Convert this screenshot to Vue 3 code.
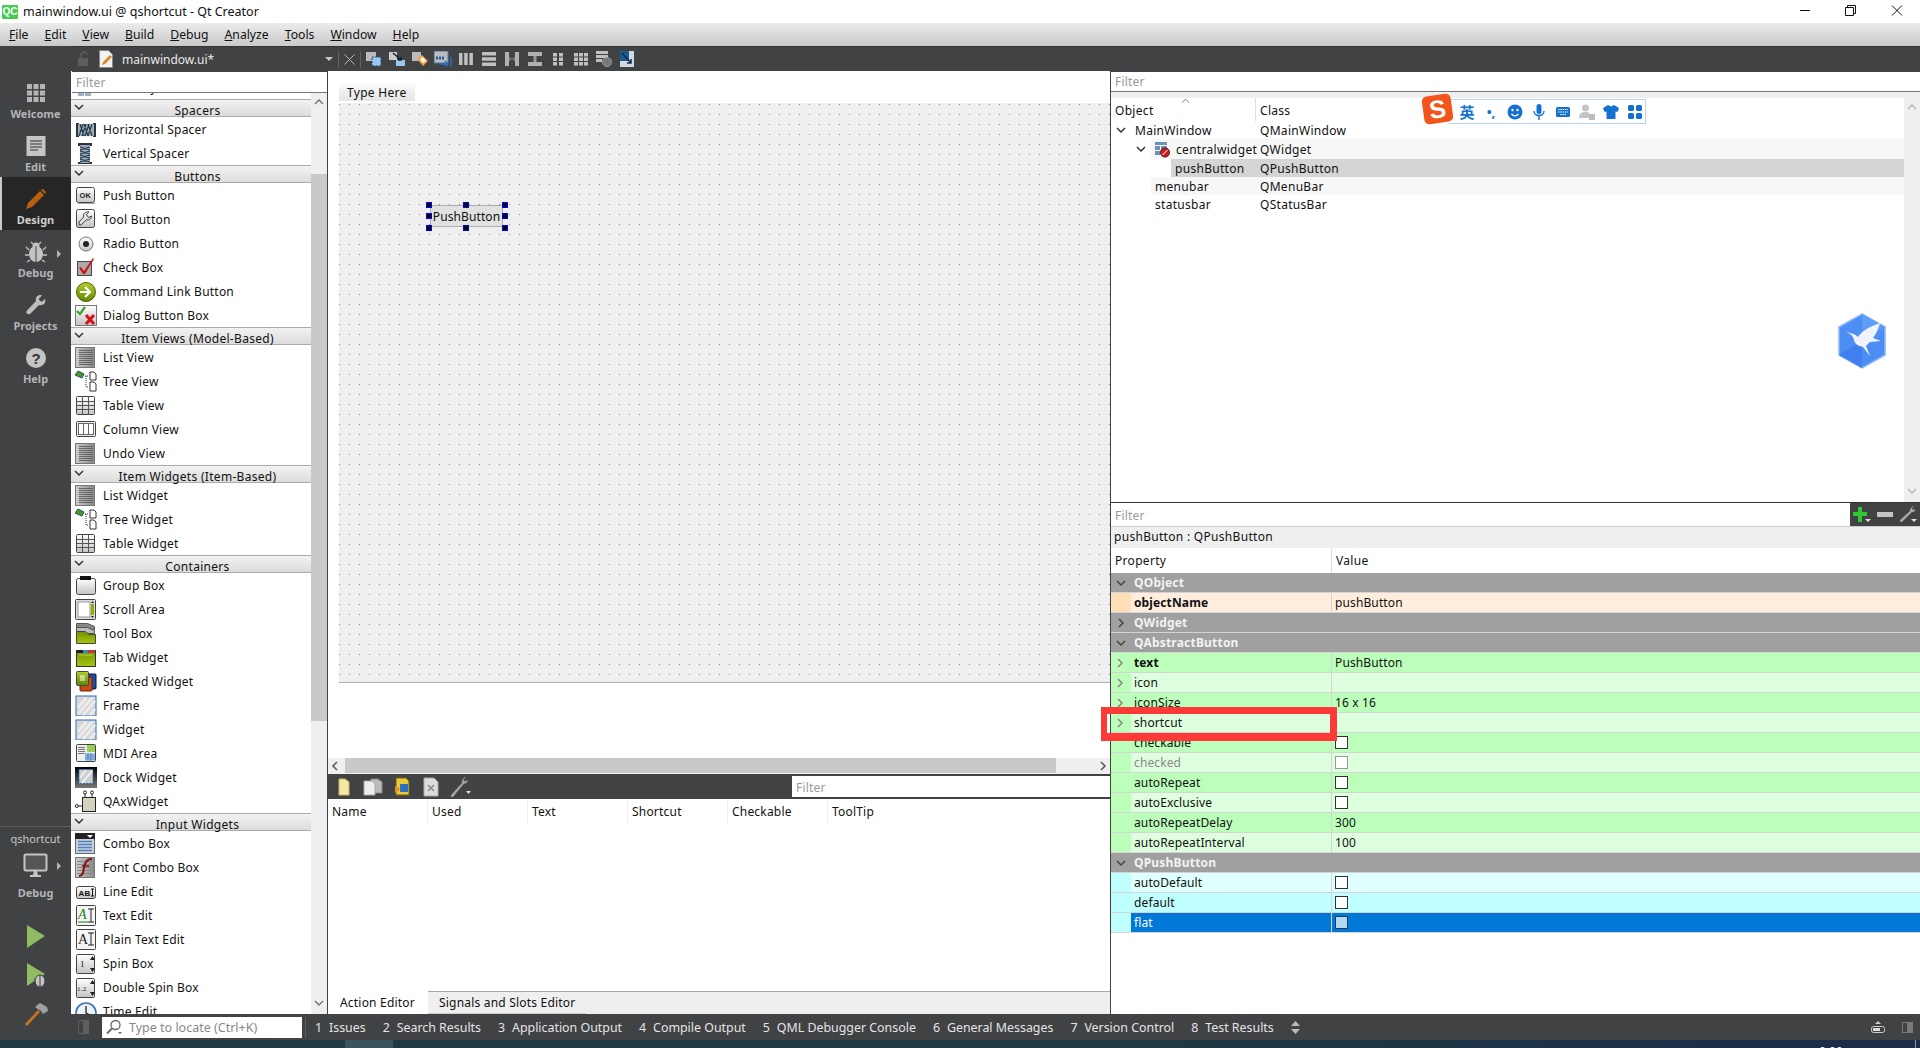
<script setup>
import { ref } from 'vue'

const menus = ['File', 'Edit', 'View', 'Build', 'Debug', 'Analyze', 'Tools', 'Window', 'Help']

const box = 'stroke="#444" stroke-width="1"'
const lines = (x1, x2, ys, c = '#777') => ys.map(y => `<path d="M${x1} ${y}H${x2}" stroke="${c}"/>`).join('')
const listIco = `<rect x=".5" y="1.5" width="19" height="20" fill="url(#gH)" stroke="#777"/>` + lines(4, 18, [4.5, 6.5, 8.5, 10.5, 12.5, 14.5, 16.5, 18.5], '#666')
const treeIco = `<path d="M0 5l3-4 6 3-2 4z" fill="#4a9a28" stroke="#255"/><path d="M10 6h4M11 6v11h3" stroke="#333" stroke-dasharray="1 1" fill="none"/><path d="M15 2h4l2 2v6h-6zM15 12h4l2 2v7h-6z" fill="#fff" stroke="#333"/>`
const tableIco = `<rect x="1.5" y="2.5" width="18" height="18" rx="1" fill="url(#gV)" ${box}/><path d="M1.5 7.5h18M1.5 11.5h18M1.5 15.5h18M7.5 2.5v18M13.5 2.5v18" stroke="#555"/>`
const hatch = `<rect x="1" y="2" width="20" height="20" fill="#d8d8d8" stroke="#2a70c0"/><path d="M3 14L11 4M3 20L17 4M8 21L20 7M15 21l5-6" stroke="#eee" stroke-width="2.4"/>`
const spin = (t, fs) => `<rect x="1.5" y="2.5" width="18" height="19" rx="1" fill="url(#gV)" ${box}/><text x="${fs > 7 ? 5 : 2}" y="15" font-size="${fs}" font-family="Liberation Serif" fill="#111">${t}</text><path d="M15 8l2.5-4 2.500 4zM15 16l2.500 4 2.500-4z" fill="#222"/>`

const icons = {
  hspacer: `<path d="M1 5h3v14H1zM18 5h3v14h-3z" fill="#333"/><rect x="3" y="6" width="16" height="12" fill="#9ab"/><path d="M4 18L8 6M7 18L11 6M10 18L14 6M13 18L17 6M5 6l4 12M9 6l4 12M13 6l4 12" stroke="#234" stroke-width="1.100"/>`,
  vspacer: `<path d="M3 1h14v3H3zM3 20h14v3H3z" fill="#333"/><rect x="5" y="3" width="10" height="18" fill="#9ab"/><path d="M5 5l10 3M5 9l10 3M5 13l10 3M5 17l10 3M15 5L5 8M15 9L5 12M15 13L5 16M15 17L5 20" stroke="#234" stroke-width="1.100"/>`,
  push: `<rect x="1.500" y="3.500" width="18" height="15" rx="2" fill="url(#gV)" ${box}/><text x="4.500" y="14" font-size="7.500" font-family="Liberation Sans" font-weight="700" fill="#222">OK</text><path d="M3 19.500h17" stroke="#aaa"/>`,
  tool: `<rect x="1.500" y="1.500" width="18" height="18" rx="2" fill="url(#gV)" ${box}/><path d="M14 4l-2.500 2.500 2 3 3-1.500c0 3-2.500 4.500-5 3.800L6 17H4v-3l4.500-5c-.8-3 2-6 5.500-5z" fill="#ddd" stroke="#444"/>`,
  radio: `<circle cx="11" cy="12" r="7" fill="url(#gV)" stroke="#777"/><circle cx="11" cy="12" r="3" fill="#222"/>`,
  check: `<rect x="2.500" y="5.500" width="14" height="14" fill="#aaa" ${box}/><path d="M6 11l3 4 9-13 1 1-9 15h-2l-4-6z" fill="#d4121a"/>`,
  command: `<circle cx="11" cy="12" r="9.500" fill="url(#gG)" stroke="#4c6500"/><path d="M5 12h9M10 7l5 5-5 5" stroke="#fff" stroke-width="2.200" fill="none"/>`,
  dialog: `<rect x=".5" y="1.500" width="21" height="20" fill="url(#gV)" stroke="#777"/><path d="M2 7l3 3 5-7" stroke="#3fa02c" stroke-width="2.200" fill="none"/><path d="M11 11l8 9M19 11l-8 9" stroke="#d4121a" stroke-width="3"/>`,
  list: listIco,
  tree: treeIco,
  table: tableIco,
  column: `<rect x="1.500" y="3.500" width="19" height="15" fill="#eee" ${box} rx="1"/><rect x="3.500" y="5.500" width="15" height="11" fill="#fff" stroke="#666"/><path d="M8.500 5.500v11M13.500 5.500v11" stroke="#666"/>`,
  group: `<rect x="1.500" y="4.500" width="19" height="16" rx="2" fill="url(#gV)" ${box}/><rect x="5" y="2" width="11" height="4" fill="#111"/>`,
  scroll: `<rect x=".5" y="1.500" width="20" height="20" rx="1" fill="#ddd" ${box}/><rect x="3" y="4" width="12" height="15" fill="#fff" stroke="#999"/><rect x="16" y="6" width="3" height="11" fill="#8fae00"/><path d="M16 5l1.500-2 1.500 2zM16 18l1.500 2 1.500-2z" fill="#222"/>`,
  toolbox: `<path d="M1.500 1.500h11l7 3v3h-18z" fill="#888" stroke="#555"/><path d="M1.500 5.500h11l7 3v3h-18z" fill="#bbb" stroke="#555"/><path d="M1.500 9.500h9l3 3h7v9h-19z" fill="url(#gG2)" stroke="#444"/>`,
  tab: `<rect x="1.500" y="4.500" width="19" height="16" fill="url(#gG2)" stroke="#333"/><path d="M1 4h10v3H1z" fill="#222"/><path d="M8 4h5v3H8z" fill="#3a85d0"/><path d="M13 4h7v3h-7z" fill="#c33"/><path d="M4 8h14v2H4z" fill="#9cbb20"/>`,
  stacked: `<rect x="8" y="4" width="13" height="15" rx="1" fill="#1c4fa0" stroke="#113"/><rect x="5" y="7" width="12" height="14" rx="1" fill="#c84b10" stroke="#622"/><rect x="1.500" y="1.500" width="12" height="14" rx="1" fill="url(#gG)" stroke="#444"/><path d="M5 6h5M5 8h5M5 10h5" stroke="#fff"/>`,
  frame: hatch,
  widget: hatch,
  mdi: `<rect x="1.500" y="2.500" width="19" height="17" rx="1" fill="#eee" ${box}/><rect x="12" y="3" width="8" height="7" fill="#9ccc55"/><rect x="10" y="11" width="10" height="8" fill="#bcd8f0"/><path d="M10 13h10M10 15h10M10 17h10M13 11v8M16 11v8" stroke="#4a80c0"/>${lines(3, 10, [5.500, 7.500, 9.500, 11.500])}`,
  dock: `<rect x="0" y="1" width="22" height="21" fill="url(#gBk)"/><rect x="4" y="3.500" width="14" height="14" fill="#ccc" stroke="#2a70c0" stroke-dasharray="2 1"/><path d="M5 12l6-8M7 17l10-12" stroke="#eee" stroke-width="2"/>`,
  qax: `<rect x="7.500" y="7.500" width="13" height="14" fill="#d6d0c0" stroke="#222"/><path d="M10 7V3M17 7V3M1 16h6" stroke="#222"/><circle cx="10" cy="2.500" r="1.500" fill="#fff" stroke="#222"/><circle cx="17" cy="2.500" r="1.500" fill="#fff" stroke="#222"/><circle cx="1.800" cy="16" r="1.500" fill="#fff" stroke="#222"/>`,
  combo: `<rect x=".5" y="1.500" width="19" height="20" fill="#c8d0d8" stroke="#666"/><rect x="0" y="1" width="20" height="6" fill="#222"/><path d="M12 3h6l-3 3z" fill="#fff"/><path d="M3 9.500h14M3 12.500h14M3 15.500h14M3 18.500h14" stroke="#5080c0" stroke-width="1.400"/>`,
  fontcombo: `<rect x=".5" y="1.500" width="19" height="20" fill="url(#gH)" stroke="#777"/>${lines(2, 18, [5.500, 8.500, 11.500, 14.500, 17.500], '#888')}<path d="M4 20c4 0 4-3 5-8s2-9 8-9" stroke="#8a1010" stroke-width="2" fill="none"/><path d="M7 10h7" stroke="#8a1010" stroke-width="1.500"/>`,
  line: `<rect x="1.500" y="6.500" width="19" height="12" rx="2" fill="url(#gV)" ${box}/><text x="3.500" y="15.500" font-size="8" font-family="Liberation Sans" font-weight="700" fill="#111">AB</text><path d="M16 9h3M16 16h3M17.500 9v7" stroke="#111"/>`,
  text: `<rect x="1.500" y="1.500" width="19" height="20" rx="1" fill="#f4f4f4" ${box}/><text x="3" y="15" font-size="14" font-style="italic" font-family="Liberation Serif" fill="#2a7a1a">A</text><path d="M3 18h10" stroke="#2a7a1a"/><path d="M13 5h6M13 18h6M16 5v13" stroke="#222"/>`,
  plain: `<rect x="1.500" y="1.500" width="19" height="20" rx="1" fill="#f4f4f4" ${box}/><text x="3" y="16" font-size="14" font-family="Liberation Serif" fill="#222">A</text><path d="M13 5h6M13 17h6M16 5v12" stroke="#222"/>`,
  spin: spin('1', 9),
  dspin: spin('1.2', 7),
  time: `<circle cx="11" cy="13" r="10" fill="#eef3fa" stroke="#3a70b0" stroke-width="1.600"/><path d="M11 6v7l4 2" stroke="#222" stroke-width="1.300" fill="none"/>`,
}

const sections = [
  { title: 'Spacers', items: [['Horizontal Spacer', 'hspacer'], ['Vertical Spacer', 'vspacer']] },
  { title: 'Buttons', items: [['Push Button', 'push'], ['Tool Button', 'tool'], ['Radio Button', 'radio'], ['Check Box', 'check'], ['Command Link Button', 'command'], ['Dialog Button Box', 'dialog']] },
  { title: 'Item Views (Model-Based)', items: [['List View', 'list'], ['Tree View', 'tree'], ['Table View', 'table'], ['Column View', 'column'], ['Undo View', 'list']] },
  { title: 'Item Widgets (Item-Based)', items: [['List Widget', 'list'], ['Tree Widget', 'tree'], ['Table Widget', 'table']] },
  { title: 'Containers', items: [['Group Box', 'group'], ['Scroll Area', 'scroll'], ['Tool Box', 'toolbox'], ['Tab Widget', 'tab'], ['Stacked Widget', 'stacked'], ['Frame', 'frame'], ['Widget', 'widget'], ['MDI Area', 'mdi'], ['Dock Widget', 'dock'], ['QAxWidget', 'qax']] },
  { title: 'Input Widgets', items: [['Combo Box', 'combo'], ['Font Combo Box', 'fontcombo'], ['Line Edit', 'line'], ['Text Edit', 'text'], ['Plain Text Edit', 'plain'], ['Spin Box', 'spin'], ['Double Spin Box', 'dspin'], ['Time Edit', 'time']] },
]

const treeRows = [
  { name: 'MainWindow', cls: 'QMainWindow', band: 1131, h: 18, chev: 1116 },
  { name: 'centralwidget', cls: 'QWidget', band: 1151, h: 20, chev: 1136, bg: '#f7f7f7', ico: true },
  { name: 'pushButton', cls: 'QPushButton', band: 1171, h: 18, bg: '#d5d5d5' },
  { name: 'menubar', cls: 'QMenuBar', band: 1151, h: 18, bg: '#f7f7f7' },
  { name: 'statusbar', cls: 'QStatusBar', band: 1151, h: 18 },
]

const props = [
  { section: 'QObject', open: true },
  { name: 'objectName', value: 'pushButton', bold: true, tone: 'orange' },
  { section: 'QWidget', open: false },
  { section: 'QAbstractButton', open: true },
  { name: 'text', value: 'PushButton', bold: true, tone: 'g1', arrow: true },
  { name: 'icon', tone: 'g2', arrow: true },
  { name: 'iconSize', value: '16 x 16', tone: 'g1', arrow: true },
  { name: 'shortcut', tone: 'g2', arrow: true },
  { name: 'checkable', tone: 'g1', check: true },
  { name: 'checked', tone: 'g2', check: true, dim: true },
  { name: 'autoRepeat', tone: 'g1', check: true },
  { name: 'autoExclusive', tone: 'g2', check: true },
  { name: 'autoRepeatDelay', value: '300', tone: 'g1' },
  { name: 'autoRepeatInterval', value: '100', tone: 'g2' },
  { section: 'QPushButton', open: true },
  { name: 'autoDefault', tone: 'c2', check: true },
  { name: 'default', tone: 'c1', check: true },
  { name: 'flat', tone: 'c1', check: true, selected: true },
]

const actionCols = ['Name', 'Used', 'Text', 'Shortcut', 'Checkable', 'ToolTip']
const outputs = ['Issues', 'Search Results', 'Application Output', 'Compile Output', 'QML Debugger Console', 'General Messages', 'Version Control', 'Test Results']
const activeTab = ref('action')
</script>

<template>
  <div class="app">
    <svg class="defs" width="0" height="0">
      <defs>
        <linearGradient id="gV" x1="0" y1="0" x2="0" y2="1"><stop offset="0" stop-color="#fff" /><stop offset="1" stop-color="#c4c4c4" /></linearGradient>
        <linearGradient id="gH" x1="0" y1="0" x2="1" y2="0"><stop offset="0" stop-color="#ccc" /><stop offset="1" stop-color="#888" /></linearGradient>
        <linearGradient id="gG" x1="0" y1="0" x2="0" y2="1"><stop offset="0" stop-color="#b4cf2e" /><stop offset="1" stop-color="#5f8800" /></linearGradient>
        <linearGradient id="gG2" x1="0" y1="0" x2="0" y2="1"><stop offset="0" stop-color="#6f9400" /><stop offset="1" stop-color="#a5c510" /></linearGradient>
        <linearGradient id="gBk" x1="0" y1="0" x2="0" y2="1"><stop offset="0" stop-color="#000" /><stop offset="1" stop-color="#777" /></linearGradient>
      </defs>
    </svg>

    <header class="titlebar">
      <span class="qc-logo">QC</span>
      <span class="title-text">mainwindow.ui @ qshortcut - Qt Creator</span>
      <div class="win-btns">
        <svg width="46" height="23" viewBox="0 0 46 23"><path d="M18 10.500h10" stroke="#111" /></svg>
        <svg width="46" height="23" viewBox="0 0 46 23"><path d="M17.500 7.500h8v8h-8zM19.500 7.500v-2h8v8h-2" stroke="#111" fill="none" /></svg>
        <svg width="46" height="23" viewBox="0 0 46 23"><path d="M18 5.500l10 10M28 5.500l-10 10" stroke="#111" fill="none" /></svg>
      </div>
    </header>

    <nav class="menubar">
      <span v-for="m in menus" :key="m"><u>{{ m[0] }}</u>{{ m.slice(1) }}</span>
    </nav>

    <div class="workspace">
      <aside class="sidebar">
        <div class="side-item">
          <svg width="22" height="22" viewBox="0 0 22 22"><path d="M2 2h5v5H2zM8.500 2h5v5h-5zM15 2h5v5h-5zM2 8.500h5v5H2zM8.500 8.500h5v5h-5zM15 8.500h5v5h-5zM2 15h5v5H2zM8.500 15h5v5h-5zM15 15h5v5h-5z" fill="#b4b4b4" /></svg>
          <span>Welcome</span>
        </div>
        <div class="side-item">
          <svg width="22" height="22" viewBox="0 0 22 22"><rect x="1.500" y="1" width="19" height="20" fill="#c4c4c4" /><path d="M5 6h12M5 9h12M5 12h12M5 15h8" stroke="#333" /></svg>
          <span>Edit</span>
        </div>
        <div class="side-item active">
          <svg width="22" height="22" viewBox="0 0 22 22"><path d="M1 21l2-6L15 3l4 4L7 19z" fill="#b8620f" /><path d="M16 2l2-1 3 3-1 2z" fill="#b8620f" /></svg>
          <span>Design</span>
        </div>
        <div class="side-item">
          <svg width="22" height="22" viewBox="0 0 22 22"><ellipse cx="11" cy="13" rx="7" ry="8" fill="#c4c4c4" /><circle cx="11" cy="5" r="3.500" fill="#c4c4c4" /><path d="M11 5v16" stroke="#404244" /><path d="M4 9L1 6M18 9l3-3M4 14H0M18 14h4M5 19l-3 2M17 19l3 2M8 3L6 1M14 3l2-2" stroke="#c4c4c4" stroke-width="1.300" /></svg>
          <span>Debug</span>
          <i class="side-tri"></i>
        </div>
        <div class="side-item">
          <svg width="22" height="22" viewBox="0 0 22 22"><path d="M20 5l-3.500 3-3-3L17 1.500C13.500 0 10 3 11 7L1.500 17c-1 2 1.500 4 3.500 3L14 11c4 1 7.500-2 6-6z" fill="#bdbdbd" /></svg>
          <span>Projects</span>
        </div>
        <div class="side-item">
          <svg width="22" height="22" viewBox="0 0 22 22"><circle cx="11" cy="11" r="10" fill="#c4c4c4" /><text x="11" y="16.500" text-anchor="middle" font-size="15" font-weight="700" font-family="Liberation Sans" fill="#333">?</text></svg>
          <span>Help</span>
        </div>

        <div class="kit">
          <div class="kit-name">qshortcut</div>
          <div class="kit-mon">
            <svg width="26" height="26" viewBox="0 0 26 26"><rect x="1.500" y="1.500" width="22" height="16" rx="1" fill="#555" stroke="#c4c4c4" stroke-width="2" /><path d="M11 18h3l1 4h3v2H7v-2h3z" fill="#c4c4c4" /></svg>
            <i class="side-tri"></i>
          </div>
          <div class="kit-label">Debug</div>
        </div>
        <div class="run-btn first">
          <svg width="24" height="24" viewBox="0 0 24 24"><path d="M3 1l18 11L3 24z" fill="#8fbb62" /></svg>
        </div>
        <div class="run-btn">
          <svg width="24" height="26" viewBox="0 0 24 26"><path d="M3 1l18 11L3 24z" fill="#8fbb62" /><ellipse cx="16" cy="19" rx="5" ry="6" fill="#c4c4c4" stroke="#404244" /><path d="M16 13v12M10 17l2 1M22 17l-2 1M10 21l2 0M22 21l-2 0" stroke="#404244" /></svg>
        </div>
        <div class="run-btn">
          <svg width="26" height="26" viewBox="0 0 26 26"><path d="M2 23L15 9l2 2L4 25z" fill="#c8741e" /><path d="M12 6l5-4 7 4 1 4-5 3-2-3-2-1z" fill="#a0a0a0" /></svg>
        </div>
      </aside>

      <div class="main">
        <div class="toolbar">
          <svg class="lock" width="14" height="16" viewBox="0 0 14 16"><path d="M1 7h10v8H1z" fill="#5a5c5e" /><path d="M4 7V4a3 3 0 0 1 6 0" stroke="#5a5c5e" stroke-width="1.500" fill="none" /></svg>
          <svg class="doc" width="14" height="18" viewBox="0 0 14 18"><path d="M.5.5h9l4 4v13H.5z" fill="#f2f2f2" stroke="#888" /><path d="M3 15l1-3 7-7 2 2-7 7z" fill="#d88a20" /></svg>
          <span class="doc-name">mainwindow.ui*</span>
          <i class="tb-arrow"></i>
          <i class="tb-sep"></i>
          <svg class="tb-close" width="11" height="11" viewBox="0 0 11 11"><path d="M.5.5l10 10M10.500.5l-10 10" stroke="#b8b8b8" /></svg>
          <i class="tb-sep second"></i>
          <div class="tb-icons">
            <svg width="16" height="16" viewBox="0 0 16 16"><rect x="0" y="1" width="10" height="9" fill="#bbb" /><rect x="6" y="6" width="9" height="9" fill="#9cc8f0" stroke="#246" stroke-dasharray="2 1" /></svg>
            <svg width="16" height="16" viewBox="0 0 16 16"><rect x="0" y="1" width="8" height="8" fill="#ccc" /><rect x="7" y="9" width="9" height="6" fill="#9cc8f0" /><path d="M4 2l8 7M12 6v3H9" stroke="#123" stroke-width="1.500" fill="none" /></svg>
            <svg width="16" height="16" viewBox="0 0 16 16"><rect x="0" y="1" width="9" height="9" fill="#bbb" /><path d="M5 8l5-4 6 6-5 5z" fill="#f5a040" /><path d="M8 8l3-2 3 4-3 2z" fill="#fff" /></svg>
            <svg width="18" height="16" viewBox="0 0 18 16"><rect x="0" y="0" width="14" height="12" fill="#bbb" stroke="#4a78b0" /><path d="M2 7h9" stroke="#2a5a9a" stroke-width="3" stroke-dasharray="2 1" /><path d="M5 13h8M11 10l3 3-3 3M17 6v10" stroke="#2a70c0" stroke-width="1.500" fill="none" /></svg>
            <svg width="14" height="14" viewBox="0 0 14 14"><path d="M0 1h3.500v12H0zM5.200 1h3.500v12H5.200zM10.400 1h3.500v12h-3.500z" fill="#c0c0c0" /></svg>
            <svg width="14" height="14" viewBox="0 0 14 14"><path d="M0 0h14v3.500H0zM0 5.200h14v3.500H0zM0 10.400h14v3.500H0z" fill="#c0c0c0" /></svg>
            <svg width="14" height="14" viewBox="0 0 14 14"><path d="M0 0h4v14H0zM10 0h4v14h-4z" fill="#b0b0b0" /><path d="M4 7h6M5 5l-1 2 1 2M9 5l1 2-1 2" stroke="#888" fill="none" /></svg>
            <svg width="14" height="14" viewBox="0 0 14 14"><path d="M0 0h14v4H0zM0 10h14v4H0z" fill="#b0b0b0" /><path d="M7 4v6" stroke="#999" stroke-width="3" /></svg>
            <svg width="10" height="14" viewBox="0 0 10 14"><path d="M0 1h4v3.500H0zM6 1h4v3.500H6zM0 5.500h4V9H0zM6 5.500h4V9H6zM0 10h4v3.500H0zM6 10h4v3.500H6z" fill="#c0c0c0" /></svg>
            <svg width="14" height="14" viewBox="0 0 14 14"><path d="M0 1h4v3.500H0zM5 1h4v3.500H5zM10 1h4v3.500h-4zM0 5.500h4V9H0zM5 5.500h4V9H5zM10 5.500h4V9h-4zM0 10h4v3.500H0zM5 10h4v3.500H5zM10 10h4v3.500h-4z" fill="#c0c0c0" /></svg>
            <svg width="16" height="16" viewBox="0 0 16 16"><path d="M0 0h12v3H0zM0 4h12v3H0zM0 8h6v3H0z" fill="#c0c0c0" /><circle cx="11" cy="11" r="4.500" fill="#777" stroke="#999" /></svg>
            <svg width="14" height="16" viewBox="0 0 14 16"><rect x="0" y="0" width="14" height="16" fill="#d0d8e0" /><path d="M0 0h9v10H0z" fill="#1a5a90" /><path d="M2 2l9 10M11 8v4H7" stroke="#0c2a50" stroke-width="1.500" fill="none" /></svg>
          </div>
        </div>

        <div class="content">
          <section class="palette">
            <div class="filter pal-filter">Filter</div>
            <div class="pal-body">
              <div class="pal-list">
                <div class="cut-row">
                  <div class="widget-row">
                    <svg class="ico" width="22" height="22" viewBox="0 0 22 22"><rect x="3" y="14" width="6" height="6" fill="#9cb0cc" /><rect x="10" y="14" width="6" height="6" fill="#9cb0cc" /></svg>
                    <span>Form Layout</span>
                  </div>
                </div>
                <template v-for="s in sections" :key="s.title">
                  <div class="pal-head">
                    <svg class="chev" viewBox="0 0 10 10"><polyline points="1,3 5,7 9,3" /></svg>
                    {{ s.title }}
                  </div>
                  <div v-for="it in s.items" :key="it[0]" class="widget-row">
                    <svg class="ico" width="22" height="22" viewBox="0 0 22 22" v-html="icons[it[1]]"></svg>
                    <span>{{ it[0] }}</span>
                  </div>
                </template>
              </div>
              <div class="vscroll">
                <svg class="sarrow" viewBox="0 0 10 10"><polyline points="1,7 5,3 9,7" /></svg>
                <div class="vthumb"></div>
                <svg class="sarrow bottom" viewBox="0 0 10 10"><polyline points="1,3 5,7 9,3" /></svg>
              </div>
            </div>
          </section>

          <section class="center">
            <div class="canvas">
              <div class="form-menu">Type Here</div>
              <div class="form">
                <div class="form-btn">
                  PushButton
                  <i v-for="n in 8" :key="n" class="handle" :class="'h' + n"></i>
                </div>
              </div>
            </div>
            <div class="hscroll">
              <svg class="sarrow" viewBox="0 0 10 10"><polyline points="7,1 3,5 7,9" /></svg>
              <div class="hthumb"></div>
              <svg class="sarrow" viewBox="0 0 10 10"><polyline points="3,1 7,5 3,9" /></svg>
            </div>
            <div class="action-tb">
              <div class="action-icons">
                <svg width="14" height="18" viewBox="0 0 14 18"><path d="M2 1h6l4 3v13H2z" fill="#f4e8a8" stroke="#cdb860" /></svg>
                <svg width="20" height="18" viewBox="0 0 20 18"><path d="M8 1h7l4 3v11H8z" fill="#bbb" stroke="#888" /><path d="M1 3h8l3 3v11H1z" fill="#eee" stroke="#aaa" /></svg>
                <svg width="18" height="20" viewBox="0 0 18 20"><path d="M3 1h10l3 3v14H3z" fill="#e8c83c" stroke="#7a5a10" /><path d="M7 7h8v8H7z" fill="#2a70c0" /><path d="M2 9l6 3-6 4z" fill="#e89020" /></svg>
                <svg width="16" height="20" viewBox="0 0 16 20"><path d="M1 1h10l4 4v14H1z" fill="#dcdcdc" stroke="#aaa" /><path d="M5 8l6 6M11 8l-6 6" stroke="#888" stroke-width="1.500" /></svg>
                <svg width="22" height="22" viewBox="0 0 22 22"><path d="M17 1l-2.500 2.500 1.500 2 2.500-1.500c.5 2-1 4-3.500 3.500L4 21H2v-2L13 7c-.5-2.500 1.500-6 4-6z" fill="#aaa" stroke="#666" stroke-width=".5" /><path d="M17 15h5l-2.500 3z" fill="#ddd" /></svg>
              </div>
              <div class="filter action-filter">Filter</div>
            </div>
            <div class="action-head">
              <div v-for="c in actionCols" :key="c" class="action-col">{{ c }}</div>
            </div>
            <div class="action-body"></div>
            <div class="tabs">
              <div class="tab" :class="{ on: activeTab === 'action' }">Action Editor</div>
              <div class="tab second" :class="{ on: activeTab === 'signals' }">Signals and Slots Editor</div>
            </div>
          </section>

          <section class="right">
            <div class="inspector">
              <div class="filter right-filter">Filter</div>
              <div class="gap-band"></div>
              <div class="insp-body">
                <div class="insp-main">
                  <div class="insp-head">
                    <div class="ih-object">Object
                      <svg class="sort" viewBox="0 0 10 6"><polyline points="1,5 5,1 9,5" /></svg>
                    </div>
                    <div class="ih-class">Class</div>
                  </div>
                  <div v-for="r in treeRows" :key="r.name" class="tree-row" :style="{ height: r.h + 'px' }">
                    <div class="tree-gutter" :style="{ width: r.band - 1111 + 'px' }">
                      <svg v-if="r.chev" class="chev" :style="{ marginLeft: r.chev - 1111 + 'px' }" viewBox="0 0 10 10"><polyline points="1,3 5,7 9,3" /></svg>
                    </div>
                    <div class="tree-band" :style="{ background: r.bg || 'transparent' }">
                      <div class="tree-name" :style="{ width: 1260 - r.band + 'px' }">
                        <svg v-if="r.ico" class="tree-ico" width="17" height="17" viewBox="0 0 17 17"><path d="M1 1h12v3H1zM1 5h5v4H1zM7 5h6v4H7zM1 10h5v4H1z" fill="#6a8fb8" /><circle cx="11" cy="11.500" r="4.500" fill="#c82020" stroke="#601010" /><path d="M8.500 14l5-5" stroke="#fff" /></svg>
                        <span>{{ r.name }}</span>
                      </div>
                      <span>{{ r.cls }}</span>
                    </div>
                  </div>
                </div>
                <div class="vscroll insp-scroll">
                  <svg class="sarrow" viewBox="0 0 10 10"><polyline points="1,7 5,3 9,7" /></svg>
                  <svg class="sarrow bottom" viewBox="0 0 10 10"><polyline points="1,3 5,7 9,3" /></svg>
                </div>
              </div>

              <div class="sogou">
                <span class="sg-s">S</span>
                <div class="sg-bar">
                  <span class="sg-cn">英</span>
                  <span class="sg-punc">•,</span>
                  <svg width="16" height="16" viewBox="0 0 16 16"><circle cx="8" cy="8" r="7.500" fill="#1372d0" /><circle cx="5.500" cy="6" r="1.200" fill="#fff" /><circle cx="10.500" cy="6" r="1.200" fill="#fff" /><path d="M4.500 10c2 2.500 5 2.500 7 0" stroke="#fff" stroke-width="1.300" fill="none" /></svg>
                  <svg width="16" height="16" viewBox="0 0 16 16"><rect x="5.500" y="0" width="5" height="10" rx="2.500" fill="#1372d0" /><path d="M3 7c0 6 10 6 10 0M8 12v4" stroke="#1372d0" stroke-width="1.400" fill="none" /></svg>
                  <svg width="16" height="16" viewBox="0 0 16 16"><rect x="1" y="3" width="14" height="10" rx="1.500" fill="#1372d0" /><path d="M3 5.500h10M3 8h10M5 10.500h6" stroke="#fff" stroke-dasharray="1.500 .8" /></svg>
                  <svg width="16" height="16" viewBox="0 0 16 16"><circle cx="6.500" cy="4" r="3.500" fill="#c4c4c4" /><path d="M0 14c0-5 3-6 6.500-6s5 1 5 6z" fill="#c4c4c4" /><path d="M10 10h6v6h-6z" fill="#bbb" /></svg>
                  <svg width="16" height="16" viewBox="0 0 16 16"><path d="M5 1l3 1.500L11 1l5 3-1.500 4-2-.5V15h-9V7.500l-2 .5L0 4z" fill="#1372d0" /></svg>
                  <svg width="16" height="16" viewBox="0 0 16 16"><rect x="1" y="1" width="6" height="6" rx="1.500" fill="#1372d0" /><rect x="9" y="1" width="6" height="6" rx="1.500" fill="#1372d0" /><rect x="1" y="9" width="6" height="6" rx="1.500" fill="#1372d0" /><rect x="9" y="9" width="6" height="6" rx="1.500" fill="#1372d0" /></svg>
                </div>
              </div>

              <svg class="thunder" width="50" height="56" viewBox="0 0 50 56">
                <path d="M25 1l23 13v28L25 55 2 42V14z" fill="#4d8ef5" stroke="#8bb6fa" stroke-width="1.500" />
                <path d="M25 1l23 13-23 14z" fill="#5f9bf7" />
                <path d="M25 55L2 42l23-14z" fill="#3f80ee" />
                <path d="M9 19c5 1 9 2 12 5 4-6 11-10 22-14-2 7-4 11-7 15l8 3-11 1c-2 2-3 3-4 4l4 10-7-9c-5-1-8-3-9-7-1-4-3-6-8-8z" fill="#eef3fd" />
              </svg>
            </div>

            <div class="prop-tb">
              <div class="filter prop-filter">Filter</div>
              <div class="prop-icons">
                <svg width="18" height="16" viewBox="0 0 18 16"><path d="M5 0h4v5h5v4H9v6H5V9H0V5h5z" fill="#32c832" /><path d="M12 12h6l-3 3z" fill="#ddd" /></svg>
                <svg width="16" height="6" viewBox="0 0 16 6"><rect x="0" y="0" width="16" height="5" fill="#c4c4c4" /></svg>
                <svg width="18" height="18" viewBox="0 0 18 18"><path d="M15 0l-2 2 1 2 2-1c.5 2-1 3.500-3 3L3 16H1v-2L11 5c-.5-2 2-5 4-5z" fill="#aaa" stroke="#666" stroke-width=".5" /><path d="M12 13h6l-3 3z" fill="#ddd" /></svg>
              </div>
            </div>
            <div class="prop-title">pushButton : QPushButton</div>
            <div class="prop-head">
              <div class="ph-name">Property</div>
              <div class="ph-val">Value</div>
            </div>
            <div class="prop-table">
              <template v-for="p in props" :key="p.section || p.name">
                <div v-if="p.section" class="prop-section">
                  <svg class="chev" viewBox="0 0 10 10"><polyline :points="p.open ? '1,3 5,7 9,3' : '3,1 7,5 3,9'" /></svg>
                  <span>{{ p.section }}</span>
                </div>
                <div v-else class="prop-row" :class="[p.tone, { selected: p.selected }]">
                  <div class="prop-gutter">
                    <svg v-if="p.arrow" class="chev dimchev" viewBox="0 0 10 10"><polyline points="3,1 7,5 3,9" /></svg>
                  </div>
                  <div class="prop-name" :class="{ bold: p.bold, dim: p.dim }">{{ p.name }}</div>
                  <div class="prop-val">
                    <i v-if="p.check" class="cb" :class="{ dim: p.dim }"></i>
                    <template v-else>{{ p.value }}</template>
                  </div>
                </div>
              </template>
            </div>
            <div class="red-box"></div>
          </section>
        </div>

        <footer class="statusbar">
          <svg class="st-toggle" width="11" height="14" viewBox="0 0 11 14"><rect x="0" y="0" width="11" height="14" fill="#5c5e60" /><rect x="1" y="1" width="4" height="12" fill="#404244" /></svg>
          <div class="locator">
            <svg width="18" height="16" viewBox="0 0 18 16"><circle cx="9.500" cy="6" r="4.500" stroke="#666" stroke-width="1.300" fill="none" /><path d="M6 9.500l-5 5" stroke="#666" stroke-width="1.800" /><path d="M12 13h4l-2 2z" fill="#666" /></svg>
            <span>Type to locate (Ctrl+K)</span>
          </div>
          <i class="st-sep"></i>
          <div class="outputs">
            <div v-for="(o, i) in outputs" :key="o" class="out"><b>{{ i + 1 }}</b>{{ o }}</div>
            <svg class="updown" width="9" height="13" viewBox="0 0 9 13"><path d="M0 5l4.500-5L9 5zM0 8l4.500 5L9 8z" fill="#bbb" /></svg>
          </div>
          <div class="st-right">
            <svg width="14" height="13" viewBox="0 0 14 13"><path d="M4 3h6L7 0z" fill="#ccc" /><rect x=".5" y="5.500" width="13" height="6" rx="2" fill="#404244" stroke="#ccc" /><rect x="2" y="7" width="7" height="3" fill="#ddd" /></svg>
            <svg width="11" height="11" viewBox="0 0 11 11"><rect width="11" height="11" fill="#7a7a7a" /><rect x="1" y="1" width="4" height="9" fill="#404244" /></svg>
          </div>
        </footer>
      </div>
    </div>

    <div class="desktop">
      <div class="task-item"></div>
      <span class="clock">0:00</span>
      <i class="tray-line"></i>
    </div>
  </div>
</template>

<style>
html, body { margin: 0; padding: 0; background: #fff; }
</style>

<style scoped>
.app {
  width: 1920px;
  height: 1048px;
  display: flex;
  flex-direction: column;
  overflow: hidden;
  font-family: "Noto Sans", "Liberation Sans", sans-serif;
  font-size: 12px;
  color: #111;
  background: #fff;
}
.defs { position: absolute; }
i { display: block; font-style: normal; }

.titlebar { height: 23px; display: flex; align-items: center; background: #fff; }
.qc-logo {
  width: 16px; height: 14px; margin-left: 2px; background: #41cd52; color: #fff;
  font: 700 10px/14px "Liberation Sans", sans-serif; text-align: center; border-radius: 1px;
}
.title-text { margin-left: 5px; font-size: 12.500px; }
.win-btns { margin-left: auto; display: flex; }

.menubar {
  height: 23px; display: flex; align-items: center; gap: 16px; padding-left: 9px;
  background: linear-gradient(#ececec, #c9c9c9); font-size: 12.200px; box-sizing: border-box;
}

.workspace { flex: 1; display: flex; min-height: 0; }
.sidebar {
  width: 71px; flex: none; background: #404244; display: flex; flex-direction: column;
  padding: 25px 0 7px; box-sizing: border-box;
}
.side-item {
  height: 53px; display: flex; flex-direction: column; align-items: center; justify-content: flex-end;
  position: relative; color: #b4b4b4; font-size: 11px; font-weight: 700; padding-bottom: 3px; box-sizing: border-box; gap: 2px;
}
.side-item.active { background: #262626; border-left: 2px solid #c8c8c8; color: #d0d0d0; padding-right: 2px; }
.side-tri {
  position: absolute; right: 10px; top: 20px; width: 0; height: 0;
  border-left: 4px solid #b4b4b4; border-top: 4px solid transparent; border-bottom: 4px solid transparent;
}
.kit { margin-top: auto; border-top: 1px solid #5a5c5e; padding-top: 4px; text-align: center; color: #c8c8c8; }
.kit-name { font-size: 11px; line-height: 15px; }
.kit-mon { position: relative; height: 39px; display: flex; justify-content: center; align-items: center; }
.kit-mon .side-tri { top: 16px; }
.kit-label { font-size: 11px; font-weight: 700; color: #b4b4b4; line-height: 15px; }
.run-btn { height: 39px; display: flex; align-items: center; justify-content: center; }
.run-btn.first { margin-top: 16px; }

.main { flex: 1; min-width: 0; display: flex; flex-direction: column; }
.toolbar { height: 25px; flex: none; background: #404244; display: flex; align-items: center; color: #e8e8e8; box-sizing: border-box; border-top: 1px solid #333; }
.lock { margin-left: 6px; }
.doc { margin-left: 8px; }
.doc-name { margin-left: 9px; font-size: 12px; width: 200px; }
.tb-arrow { width: 0; height: 0; border: 4px solid transparent; border-top: 4px solid #c8c8c8; margin-top: 4px; margin-left: 3px; }
.tb-sep { width: 1px; height: 17px; background: #606264; margin-left: 5px; }
.tb-close { margin-left: 5px; }
.tb-sep.second { margin-left: 5px; }
.tb-icons { display: grid; grid-auto-flow: column; grid-auto-columns: 23px; justify-items: center; align-items: center; margin-left: 1px; }

.content { flex: 1; display: flex; min-height: 0; }
.filter {
  background: #fff; color: #999; box-sizing: border-box; border-top: 1px solid #404244;
  border-bottom: 1px solid #777; padding-left: 4px; line-height: 21px; height: 22px; letter-spacing: .2px;
}
.palette { width: 257px; flex: none; border-right: 1px solid #404244; display: flex; flex-direction: column; box-sizing: border-box; }
.pal-filter { width: 255px; margin-left: 1px; }
.pal-body { flex: 1; display: flex; min-height: 0; }
.pal-list { width: 240px; flex: none; overflow: hidden; }
.cut-row { height: 6px; overflow: hidden; }
.cut-row .widget-row { margin-top: -18px; }
.pal-head {
  height: 18px; box-sizing: border-box; border-top: 1px solid #aaa; border-bottom: 1px solid #aaa;
  background: linear-gradient(#f2f2f2, #dcdcdc); text-align: center; padding-left: 13px; line-height: 21px;
  position: relative; letter-spacing: .3px;
}
.pal-head .chev { position: absolute; left: 3px; top: 2px; }
.widget-row { height: 24px; display: flex; align-items: center; padding-left: 4px; gap: 6px; letter-spacing: .22px; }
.ico { flex: none; }
.chev { width: 10px; height: 10px; flex: none; fill: none; stroke: #333; stroke-width: 1.500; }
.vscroll { flex: 1; background: #efefef; position: relative; display: flex; flex-direction: column; align-items: center; }
.sarrow { width: 10px; height: 10px; margin: 4px 0; flex: none; fill: none; stroke: #777; stroke-width: 1.500; }
.sarrow.bottom { position: absolute; bottom: 2px; left: 3px; }
.vthumb { position: absolute; top: 81px; left: 0; right: 0; height: 547px; background: #c9c9c9; }

.center { width: 782px; flex: none; display: flex; flex-direction: column; }
.canvas { height: 687px; flex: none; padding: 12px 0 0 11px; box-sizing: border-box; background: #fff; }
.form-menu {
  width: 76px; height: 18px; line-height: 19px; padding-left: 8px; box-sizing: border-box;
  background: linear-gradient(#fff, #eee 50%, #e6e6e6); letter-spacing: .3px;
}
.form {
  margin-top: 2px; height: 580px; background-color: #efefef; box-sizing: border-box; border-bottom: 1px solid #b0b0b0;
  background-image: conic-gradient(from 270deg at 1px 1px, #888 25%, transparent 0);
  background-size: 10px 10px; background-position: 0 1px; position: relative;
}
.form-btn {
  position: absolute; left: 91px; top: 102px; width: 73px; height: 22px; box-sizing: border-box;
  background: #e1e1e1; border: 1px solid #adadad; text-align: center; line-height: 21px; letter-spacing: .1px;
}
.handle { position: absolute; width: 4px; height: 4px; background: #000; border: 1px solid #00f; }
.h1 { left: -5px; top: -4px; } .h2 { left: 32px; top: -4px; } .h3 { right: -6px; top: -4px; }
.h4 { left: -5px; top: 7px; } .h5 { right: -6px; top: 7px; }
.h6 { left: -5px; bottom: -5px; } .h7 { left: 32px; bottom: -5px; } .h8 { right: -6px; bottom: -5px; }

.hscroll { height: 16px; flex: none; background: #efefef; display: flex; align-items: center; justify-content: space-between; position: relative; padding: 0 1px; box-sizing: border-box; }
.hscroll .sarrow { margin: 0 1px; stroke: #555; }
.hthumb { position: absolute; left: 17px; width: 711px; top: 0; height: 15px; background: #c9c9c9; }
.action-tb { height: 25px; flex: none; background: #404244; display: flex; align-items: center; }
.action-icons { width: 464px; display: grid; grid-auto-flow: column; grid-auto-columns: 29px; justify-items: center; align-items: center; padding-left: 1px; box-sizing: border-box; justify-content: start; }
.action-filter { flex: 1; height: 21px; border: 0; line-height: 23px; }
.action-head { height: 24px; flex: none; display: flex; background: #fff; }
.action-col { width: 100px; padding-left: 4px; box-sizing: border-box; line-height: 26px; border-right: 1px solid #eee; letter-spacing: .2px; }
.action-col:last-child { border-right: 0; }
.action-body { flex: 1; }
.tabs { height: 23px; flex: none; background: #efefef; border-top: 1px solid #a8a8a8; display: flex; box-sizing: border-box; }
.tab { padding: 0 12px; line-height: 21px; letter-spacing: .2px; }
.tab:first-child { width: 100px; box-sizing: border-box; }
.tab.on { background: #fff; margin-top: -1px; line-height: 23px; }
.tab.second { border-bottom: 1px solid #ccc; height: 21px; padding-left: 11px; padding-right: 11px; }

.right { flex: 1; min-width: 0; border-left: 1px solid #404244; display: flex; flex-direction: column; position: relative; background: #fff; }
.inspector { height: 431px; flex: none; display: flex; flex-direction: column; position: relative; }
.right-filter { height: 21px; line-height: 20px; border-bottom-color: #777; flex: none; }
.gap-band { height: 6px; background: #efefef; flex: none; }
.insp-body { flex: 1; display: flex; min-height: 0; }
.insp-main { flex: 1; }
.insp-scroll { flex: none; width: 16px; }
.insp-scroll .sarrow { stroke: #b4b4b4; }
.insp-head { height: 23px; display: flex; line-height: 26px; position: relative; }
.ih-object { width: 145px; padding-left: 4px; box-sizing: border-box; border-right: 1px solid #ddd; position: relative; letter-spacing: .3px; }
.sort { position: absolute; left: 70px; top: 0; width: 9px; height: 6px; fill: none; stroke: #666; }
.ih-class { padding-left: 4px; letter-spacing: .3px; }
.tree-row { display: flex; align-items: stretch; letter-spacing: .3px; }
.tree-gutter { flex: none; display: flex; align-items: center; }
.tree-band { flex: 1; display: flex; align-items: center; }
.tree-name { flex: none; display: flex; align-items: center; gap: 5px; padding-left: 4px; box-sizing: border-box; white-space: nowrap; }
.tree-ico { flex: none; margin-left: -1px; }
.sogou { position: absolute; left: 312px; top: 24px; display: flex; align-items: flex-start; }
.sg-s {
  width: 29px; height: 28px; background: #f2541b; color: #fff; font: 700 25px/28px "Liberation Sans", sans-serif; text-align: center;
  border-radius: 5px; transform: rotate(-8deg); position: relative; z-index: 1; margin-right: -4px;
}
.sg-bar {
  height: 25px; width: 198px; margin-top: 4px; background: #fff; border: 1px solid #b8d4f4; border-left: 0;
  display: grid; grid-auto-flow: column; grid-auto-columns: 24px; justify-items: center; align-items: center;
  padding-left: 7px; box-sizing: border-box; justify-content: start;
}
.sg-cn { font: 700 15px "Noto Sans CJK SC", sans-serif; color: #1372d0; }
.sg-punc { color: #1372d0; font-weight: 700; font-size: 13px; }
.thunder { position: absolute; left: 726px; top: 242px; }

.prop-tb { height: 24px; flex: none; background: #404244; display: flex; align-items: stretch; box-sizing: border-box; border-top: 1px solid #333; }
.prop-filter { width: 739px; flex: none; border: 0; height: auto; line-height: 25px; }
.prop-icons { flex: 1; display: flex; align-items: center; gap: 6px; padding-left: 3px; }
.prop-title { height: 21px; flex: none; background: #efefef; line-height: 19px; padding-left: 3px; letter-spacing: .3px; border-top: 1px solid #ccc; }
.prop-head { height: 25px; flex: none; display: flex; line-height: 26px; letter-spacing: .3px; }
.ph-name { width: 221px; padding-left: 4px; box-sizing: border-box; border-right: 1px solid #ddd; }
.ph-val { padding-left: 4px; }
.prop-table { flex: 1; }
.prop-section {
  height: 20px; box-sizing: border-box; background: #a0a0a0; border-bottom: 1px solid #d4d4d4; display: flex; align-items: center;
  color: #f2f2f2; font-weight: 700; padding-left: 2px; letter-spacing: .2px;
}
.prop-section .chev { stroke: #444; margin-right: 8px; margin-left: 3px; }
.prop-row { height: 20px; display: flex; box-sizing: border-box; border-bottom: 1px solid #d4d4d4; line-height: 19px; letter-spacing: .12px; }
.prop-gutter { width: 20px; flex: none; display: flex; align-items: center; padding-left: 4px; box-sizing: border-box; }
.dimchev { stroke: #888; }
.prop-name { width: 201px; flex: none; padding-left: 3px; border-right: 1px solid #d4d4d4; box-sizing: border-box; }
.prop-name.bold { font-weight: 700; }
.prop-name.dim { color: #888; }
.prop-val { padding-left: 3px; flex: 1; display: flex; align-items: center; }
.orange { background: #ffeedd; } .orange .prop-gutter { background: #ffdfb8; }
.g1 { background: #bbffbb; } .g2 { background: #ddffdd; } .g1 .prop-gutter, .g2 .prop-gutter { background: #bbffbb; }
.c1 { background: #c0ffff; } .c2 { background: #e0ffff; } .c1 .prop-gutter, .c2 .prop-gutter { background: #c0ffff; }
.selected .prop-name, .selected .prop-val { background: #0078d7; color: #fff; }
.cb { width: 13px; height: 13px; background: #fff; border: 1px solid #333; box-sizing: border-box; }
.cb.dim { border-color: #999; }
.selected .cb { background: #b3d7f3; border-color: #1a3a5a; }
.red-box {
  position: absolute; left: -10px; top: 636px; width: 236px; height: 34px; box-sizing: border-box;
  border: 7px solid #ff3838; border-width: 7px 7px 8px 6px;
}

.statusbar { height: 26px; flex: none; background: #404244; display: flex; align-items: center; color: #e4e4e4; }
.st-toggle { margin-left: 7px; }
.locator {
  width: 200px; height: 21px; margin-left: 13px; background: #fff; display: flex; align-items: center; gap: 5px; color: #888; padding-left: 4px; box-sizing: border-box;
  font-size: 12.500px; white-space: nowrap;
}
.st-sep { width: 1px; height: 21px; background: #5c5e60; margin-left: 3px; }
.outputs { display: flex; align-items: center; gap: 17px; margin-left: 9px; white-space: nowrap; font-size: 12.400px; }
.out b { display: inline-block; width: 14px; font-weight: 400; }
.st-right { margin-left: auto; display: flex; align-items: center; gap: 17px; padding-right: 7px; }

.desktop { height: 8px; flex: none; background: linear-gradient(90deg, #1e3a44 60%, #1c2b48); position: relative; overflow: hidden; }
.task-item { position: absolute; left: 345px; width: 48px; top: 0; bottom: 0; background: #3a5560; }
.clock { position: absolute; left: 1819px; top: 5px; color: #fff; font-size: 12px; line-height: 14px; }
.tray-line { position: absolute; left: 1915px; top: 0; bottom: 0; width: 1px; background: #8894a8; }
</style>
